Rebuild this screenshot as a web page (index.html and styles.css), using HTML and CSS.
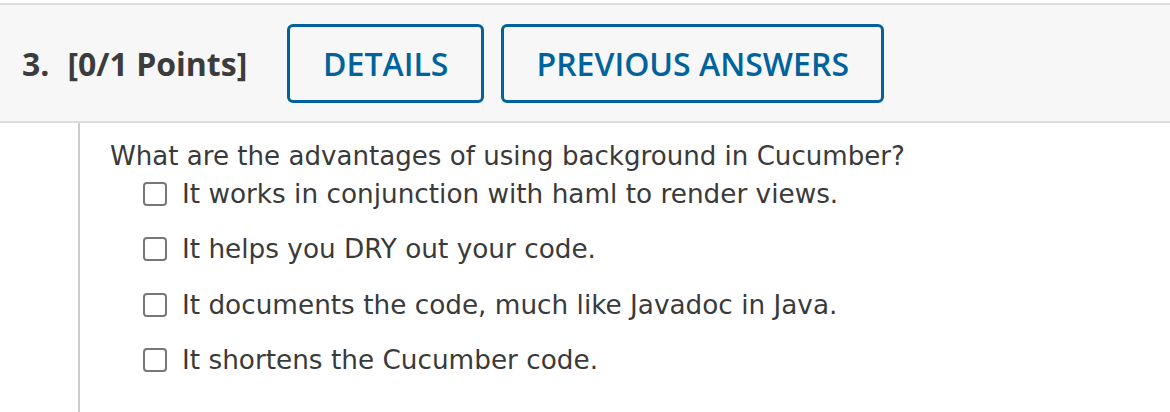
FILE: index.html
```html
<!DOCTYPE html>
<html>
<head>
<meta charset="utf-8">
<link rel="stylesheet" href="styles.css">
</head>
<body>
<div class="header">
  <div class="title"><span class="num">3.</span><span class="pts">[0/1 Points]</span></div>
  <div class="buttons">
    <button class="btn btn-details">DETAILS</button>
    <button class="btn btn-prev">PREVIOUS ANSWERS</button>
  </div>
</div>
<div class="content">
  <div class="question">What are the advantages of using background in Cucumber?</div>
  <ul class="options">
    <li class="option"><span class="box"></span><span class="label">It works in conjunction with haml to render views.</span></li>
    <li class="option"><span class="box"></span><span class="label">It helps you DRY out your code.</span></li>
    <li class="option"><span class="box"></span><span class="label">It documents the code, much like Javadoc in Java.</span></li>
    <li class="option"><span class="box"></span><span class="label">It shortens the Cucumber code.</span></li>
  </ul>
</div>
</body>
</html>
```
FILE: styles.css
```css
html, body {
  margin: 0;
  padding: 0;
  background: #ffffff;
}
body {
  height: 412px;
  overflow: hidden;
}
.header {
  margin-top: 3px;
  height: 116px;
  border-top: 2px solid #dddddd;
  border-bottom: 2px solid #dddddd;
  background: #f7f7f7;
  display: flex;
  align-items: center;
  padding-left: 22px;
}
.title {
  font-family: "Open Sans", sans-serif;
  font-weight: 700;
  font-size: 32px;
  color: #3c3c3c;
  display: flex;
  gap: 18px;
}
.buttons {
  display: flex;
  gap: 17px;
  margin-left: 40px;
}
.btn {
  height: 79px;
  border: 3px solid #00639b;
  border-radius: 6px;
  background: transparent;
  color: #00639b;
  font-family: "Open Sans", sans-serif;
  font-weight: 600;
  font-size: 32px;
  padding: 0;
  box-sizing: border-box;
}
.btn-details { width: 197px; }
.btn-prev { width: 383px; }
.content {
  margin-left: 78px;
  border-left: 2px solid #cccccc;
  height: 290px;
  padding-left: 30px;
  font-family: "DejaVu Sans", Verdana, sans-serif;
  font-size: 26.3px;
  color: #3a3a3a;
}
.question {
  padding-top: 18px;
  line-height: 30px;
  font-size: 26.1px;
}
.options {
  list-style: none;
  margin: 0;
  padding: 0 0 0 33px;
}
.option {
  display: flex;
  align-items: center;
  height: 55.5px;
}
.option:first-child { margin-top: -5px; }
.box {
  width: 20px;
  height: 20px;
  border: 2px solid #777777;
  border-radius: 4px;
  margin-right: 15px;
  flex: none;
}
```
